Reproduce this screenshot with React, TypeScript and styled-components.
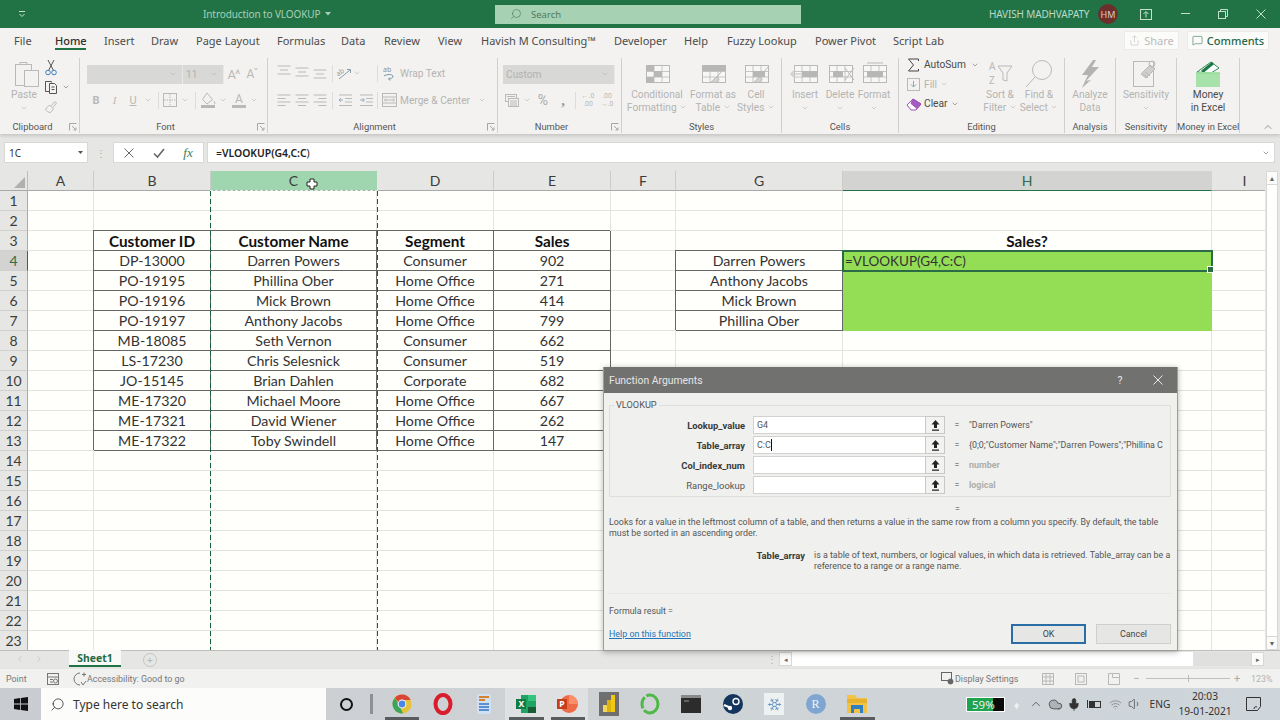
import React from "react";
import styled, { createGlobalStyle } from "styled-components";
import {
  ChevronDown,
  ChevronLeft,
  ChevronRight,
  ChevronUp,
  Cloud,
  MessageSquare,
  Mic,
  Search,
  Share,
  Snowflake,
  Volume1,
  Wifi,
} from "lucide-react";

const UI_FONT = `"Noto Sans", "Open Sans", sans-serif`;
const SMALL_FONT = `Roboto, "Noto Sans", sans-serif`;
const GRID_FONT = `Lato, "Open Sans", sans-serif`;
const GREEN = "#217346";
const GREY = "#b9b9b7";

const GlobalStyle = createGlobalStyle`
  html, body { margin: 0; padding: 0; background: #f3f2f0; }
  * { box-sizing: border-box; }
`;

const Page = styled.div`
  position: relative;
  width: 1280px;
  height: 720px;
  overflow: hidden;
  display: flex;
  flex-direction: column;
  font-family: ${UI_FONT};
  color: #444;
  background: #f3f2f0;
`;

const Slot = styled.span<{ $w: number; $color?: string }>`
  flex: none;
  width: ${(p) => p.$w}px;
  display: flex;
  align-items: center;
  justify-content: center;
  color: ${(p) => p.$color || "inherit"};
`;

/* ---------- title bar ---------- */
const TitleBar = styled.header`
  flex: none;
  height: 28px;
  background: ${GREEN};
  display: flex;
  align-items: center;
  color: #c4e0cd;
  font-size: 10px;
`;
const DocTitle = styled.div`
  width: 292px;
  margin-left: 159px;
  display: flex;
  align-items: center;
  gap: 5px;
  color: #a9cfb6;
  letter-spacing: -0.1px;
`;
const SearchBox = styled.div`
  width: 306px;
  height: 19px;
  background: #a6d2b3;
  display: flex;
  align-items: center;
  gap: 9px;
  padding-left: 15px;
  color: #51795f;
  font-size: 9.5px;
`;
const UserName = styled.div`
  margin-left: 188px;
  width: 100px;
  white-space: nowrap;
  color: #bcd9c6;
  letter-spacing: -0.15px;
`;
const Avatar = styled.div`
  margin-left: 9px;
  width: 20px;
  height: 20px;
  border-radius: 50%;
  background: #6b2f2c;
  color: #ddc9c6;
  font-size: 9px;
  display: flex;
  align-items: center;
  justify-content: center;
`;
const WindowButton = styled(Slot)`
  height: 100%;
`;

/* ---------- tabs ---------- */
const TabRow = styled.nav`
  flex: none;
  height: 27px;
  display: flex;
  align-items: center;
  font-size: 11px;
  color: #4c4c4a;
  padding: 0 0 2px 14px;
`;
const Tab = styled.span<{ $w: number; $active?: boolean }>`
  position: relative;
  flex: none;
  width: ${(p) => p.$w}px;
  white-space: nowrap;
  font-weight: ${(p) => (p.$active ? 500 : 400)};
  color: ${(p) => (p.$active ? "#2f2f2f" : "inherit")};
  &::after {
    content: "";
    display: ${(p) => (p.$active ? "block" : "none")};
    position: absolute;
    left: 0;
    top: 15px;
    width: 31px;
    height: 2px;
    background: ${GREEN};
  }
`;
const PillButton = styled.div<{ $w: number; $muted?: boolean }>`
  flex: none;
  width: ${(p) => p.$w}px;
  height: 19px;
  background: #fbfbf9;
  border: 1px solid #ecebe9;
  display: flex;
  align-items: center;
  justify-content: center;
  gap: 4px;
  font-size: 11px;
  font-weight: ${(p) => (p.$muted ? 400 : 500)};
  color: ${(p) => (p.$muted ? "#bcbcba" : "#27674a")};
`;

/* ---------- ribbon ---------- */
const Ribbon = styled.section`
  flex: none;
  height: 79px;
  display: flex;
  padding-top: 4px;
  padding-bottom: 1px;
  background: #f3f2f0;
  box-shadow: 0 2px 3px rgba(0, 0, 0, 0.14);
  position: relative;
  z-index: 2;
  font-family: ${SMALL_FONT};
`;
const Group = styled.div<{ $w: number }>`
  flex: none;
  width: ${(p) => p.$w}px;
  margin-top: -1px;
  border-right: 1px solid #cfcfcd;
  display: flex;
  flex-direction: column;
  position: relative;
`;
const GroupBody = styled.div<{ $pad?: number; $col?: boolean }>`
  flex: 1;
  display: flex;
  flex-direction: ${(p) => (p.$col ? "column" : "row")};
  padding-left: ${(p) => p.$pad || 0}px;
  padding-top: 1px;
  min-height: 0;
`;
const GroupLabel = styled.div<{ $shift?: number }>`
  flex: none;
  height: 13px;
  line-height: 13px;
  font-size: 9.4px;
  text-align: center;
  color: #555;
  white-space: nowrap;
  padding-right: ${(p) => p.$shift || 0}px;
`;
const Launcher = styled.span`
  position: absolute;
  right: 2px;
  bottom: 2px;
  width: 8px;
  height: 8px;
  display: flex;
  color: #a6a6a4;
`;
const ToolRow = styled.div<{ $top?: number }>`
  height: 20px;
  margin-top: ${(p) => p.$top || 0}px;
  display: flex;
  align-items: center;
  color: ${GREY};
  font-size: 10.2px;
`;
const Combo = styled.div<{ $w: number }>`
  flex: none;
  width: ${(p) => p.$w}px;
  height: 19px;
  background: #d8d8d6;
  border-right: 1px solid #e8e8e6;
  display: flex;
  align-items: center;
  justify-content: space-between;
  padding: 0 5px 0 3px;
  color: #b2b2b0;
  font-size: 10.2px;
`;
const RowSep = styled.span`
  flex: none;
  width: 1px;
  height: 17px;
  background: #dcdcda;
`;
const ToolText = styled.span<{ $w?: number; $on?: boolean }>`
  flex: none;
  white-space: nowrap;
  width: ${(p) => (p.$w ? `${p.$w}px` : "auto")};
  color: ${(p) => (p.$on ? "#4a4a48" : "#b4b4b2")};
`;
const LargeTool = styled.div<{ $w: number; $on?: boolean }>`
  flex: none;
  width: ${(p) => p.$w}px;
  display: flex;
  flex-direction: column;
  align-items: center;
  font-size: 10.2px;
  line-height: 13px;
  white-space: nowrap;
  color: ${(p) => (p.$on ? "#4a4a48" : "#b4b4b2")};
`;
const IconZone = styled.div`
  height: 29px;
  display: flex;
  align-items: center;
  justify-content: center;
  color: ${GREY};
`;
const TinyChev = styled(ChevronDown).attrs({ size: 8, strokeWidth: 1.5 })`
  color: #a9a9a7;
  flex: none;
`;
const MiniCol = styled.div<{ $w: number; $pad?: number; $top?: number }>`
  flex: none;
  width: ${(p) => p.$w}px;
  padding-left: ${(p) => p.$pad || 0}px;
  margin-top: ${(p) => p.$top || 0}px;
  display: flex;
  flex-direction: column;
`;
const EditRow = styled.div`
  height: 19.5px;
  display: flex;
  align-items: center;
  gap: 3px;
  font-size: 10.2px;
  flex: none;
`;
const ClipSlot = styled(Slot)`
  height: 19.5px;
`;

/* ---------- formula bar ---------- */
const FormulaBar = styled.section`
  flex: none;
  height: 37px;
  padding: 8px 5px 8px 4px;
  background: #e6e6e4;
  display: flex;
  align-items: stretch;
`;
const NameBox = styled.div`
  width: 84px;
  background: #fff;
  border: 1px solid #d8d8d6;
  display: flex;
  align-items: center;
  justify-content: space-between;
  padding: 0 4px;
  font-size: 10px;
  color: #333;
`;
const Dots = styled.div`
  width: 25px;
  display: flex;
  align-items: center;
  justify-content: center;
  color: #aaa;
  font-size: 10px;
`;
const FxBox = styled.div`
  width: 91px;
  background: #fff;
  border: 1px solid #d8d8d6;
  display: flex;
  align-items: center;
  margin-right: 3px;
  color: #666;
`;
const FormulaInput = styled.div`
  flex: 1;
  background: #fff;
  border: 1px solid #d8d8d6;
  display: flex;
  align-items: center;
  justify-content: space-between;
  padding: 0 4px 0 8px;
  font-size: 10.4px;
  color: #222;
`;
const Fx = styled.i`
  font-family: "Liberation Serif", serif;
  font-size: 13px;
  color: #3a7d55;
`;

/* ---------- sheet ---------- */
const SheetArea = styled.section`
  flex: none;
  height: 479px;
  display: flex;
  background: #e6e6e4;
`;
const GridWrap = styled.div`
  position: relative;
  width: 1265px;
  overflow: hidden;
  background: #fffffc;
`;
const SheetGrid = styled.div`
  display: grid;
  grid-template-columns: 28px 66px 117px 166px 117px 117px 65px 167px 369px 66px;
  grid-auto-rows: 20px;
  font-family: ${GRID_FONT};
  font-size: 14.2px;
  color: #333;
`;
const Corner = styled.div`
  background: #e6e6e4;
  border-right: 1px solid #bdbdbb;
  border-bottom: 1px solid #a9a9a7;
  display: flex;
  justify-content: flex-end;
  align-items: flex-end;
  padding: 0 2px 2px 0;
`;
const ColHead = styled.div<{ $state?: "copy" | "active" }>`
  background: ${(p) =>
    p.$state === "copy" ? "#9fd6b0" : p.$state === "active" ? "#d3d3d1" : "#e6e6e4"};
  border-right: 1px solid ${(p) => (p.$state ? "transparent" : "#cbcbc9")};
  border-bottom: 1px solid ${(p) => (p.$state === "active" ? GREEN : "#a9a9a7")};
  color: ${(p) => (p.$state === "active" ? "#2f6b4a" : "#3c3c3c")};
  display: flex;
  align-items: center;
  justify-content: center;
  font-size: 14px;
`;
const RowHead = styled.div<{ $active?: boolean }>`
  background: ${(p) => (p.$active ? "#d3d3d1" : "#e6e6e4")};
  border-right: 1px solid ${(p) => (p.$active ? GREEN : "#a9a9a7")};
  border-bottom: 1px solid #d0d0ce;
  color: ${(p) => (p.$active ? "#2f6b4a" : "#3c3c3c")};
  display: flex;
  align-items: center;
  justify-content: center;
  font-size: 14px;
`;
const Cell = styled.div<{
  $bold?: boolean;
  $boxed?: boolean;
  $fill?: boolean;
  $active?: boolean;
  $left?: boolean;
}>`
  position: relative;
  display: flex;
  align-items: center;
  justify-content: ${(p) => (p.$left ? "flex-start" : "center")};
  padding-left: ${(p) => (p.$left ? 2 : 0)}px;
  white-space: nowrap;
  font-weight: ${(p) => (p.$bold ? 700 : 400)};
  font-size: ${(p) => (p.$bold ? 15.3 : p.$active ? 13.5 : 14.2)}px;
  color: ${(p) => (p.$bold ? "#111" : "#333")};
  background: ${(p) => (p.$fill ? "#94de56" : "transparent")};
  border-right: 1px solid
    ${(p) => (p.$boxed ? "#666" : p.$fill ? "transparent" : "#e3e3e1")};
  border-bottom: 1px solid
    ${(p) => (p.$boxed ? "#666" : p.$fill ? "transparent" : "#e3e3e1")};
  ${(p) => (p.$boxed ? "box-shadow: -1px -1px #666;" : "")}
  ${(p) =>
    p.$active
      ? `outline: 2px solid #2b6b45; outline-offset: -1px; z-index: 1;
         &::after { content: ""; position: absolute; right: -3px; bottom: -3px; width: 5px; height: 5px; background: #2b6b45; border: 1px solid #fff; }`
      : ""}
`;
const MarchingAnts = styled.div`
  position: absolute;
  left: 210px;
  top: 19px;
  width: 168px;
  bottom: 0;
  border-top: 1px dashed #d9efe0;
  pointer-events: none;
  &::before,
  &::after {
    content: "";
    position: absolute;
    top: 0;
    bottom: 0;
    width: 1px;
    background: repeating-linear-gradient(to bottom, #14603a 0 5px, transparent 5px 8px);
  }
  &::before {
    left: 0;
  }
  &::after {
    right: 0;
  }
`;
const CellCursor = styled.svg`
  position: absolute;
  left: 306px;
  top: 7px;
`;
const VScroll = styled.div`
  width: 15px;
  display: flex;
  flex-direction: column;
  padding: 0 2px 0 1px;
`;
const VTrack = styled.div`
  flex: 1;
  background: #fff;
  border: 1px solid #d8d8d6;
  border-top: none;
  border-bottom: none;
`;
const ArrowBox = styled.div<{ $w?: number; $h?: number }>`
  flex: none;
  width: ${(p) => (p.$w ? `${p.$w}px` : "100%")};
  height: ${(p) => (p.$h ? `${p.$h}px` : "100%")};
  background: #fbfbf9;
  border: 1px solid #d8d8d6;
  display: flex;
  align-items: center;
  justify-content: center;
  font-size: 7px;
  color: #666;
`;

/* ---------- sheet tabs + status ---------- */
const SheetTabs = styled.section`
  flex: none;
  height: 18px;
  background: #e6e6e4;
  border-top: 1px solid #bdbdbb;
  display: flex;
  align-items: flex-start;
  color: #bbb;
`;
const TabArrows = styled.div`
  width: 69px;
  height: 16px;
  display: flex;
  align-items: center;
  padding-left: 15px;
  gap: 9px;
`;
const SheetTab = styled.div`
  width: 52px;
  height: 17px;
  background: #f9f9f7;
  border-bottom: 2px solid ${GREEN};
  color: #1f6b45;
  font-size: 10.4px;
  font-weight: 700;
  display: flex;
  align-items: center;
  justify-content: center;
  margin-top: -1px;
`;
const AddSheet = styled.span`
  width: 14px;
  height: 14px;
  border-radius: 50%;
  border: 1px solid #c6c6c4;
  color: #b9b9b7;
  font-size: 11px;
  line-height: 11px;
  text-align: center;
  margin: 2px 0 0 22px;
`;
const HScroll = styled.div`
  margin-left: 610px;
  width: 497px;
  height: 16px;
  display: flex;
  align-items: center;
`;
const HTrack = styled.div<{ $w: number; $blank?: boolean }>`
  flex: none;
  width: ${(p) => p.$w}px;
  height: 14px;
  background: ${(p) => (p.$blank ? "#e0e0de" : "#fff")};
`;
const SplitDots = styled.span`
  flex: none;
  width: 12px;
  color: #aaa;
  font-size: 10px;
`;
const StatusBar = styled.footer`
  flex: none;
  height: 20px;
  background: #f1f1ef;
  border-top: 1px solid #e4e4e2;
  display: flex;
  align-items: center;
  font-family: ${SMALL_FONT};
  font-size: 8.9px;
  color: #777;
  white-space: nowrap;
`;
const StatusText = styled.span<{ $w: number; $left?: number }>`
  flex: none;
  width: ${(p) => p.$w}px;
  margin-left: ${(p) => p.$left || 0}px;
`;
const ZoomTrack = styled.span`
  position: relative;
  flex: none;
  width: 84px;
  height: 1px;
  background: #c0c0be;
  &::after {
    content: "";
    position: absolute;
    left: 42px;
    top: -3px;
    width: 1px;
    height: 7px;
    background: #bbb;
  }
`;
const ZoomLevel = styled.span`
  margin-left: 7px;
  color: #b4b4b2;
`;

/* ---------- taskbar ---------- */
const Taskbar = styled.footer`
  flex: none;
  height: 32px;
  background: linear-gradient(to right, #c9ccd0, #cfd3d6 50%, #ced6db);
  display: flex;
  align-items: stretch;
`;
const TaskSearch = styled.div`
  width: 285px;
  background: #fcfcfa;
  display: flex;
  align-items: center;
  gap: 8px;
  padding-left: 9px;
  font-size: 12px;
  color: #333;
`;
const TaskIcon = styled.div<{ $open?: boolean; $active?: boolean }>`
  position: relative;
  flex: none;
  width: 41.4px;
  display: flex;
  align-items: center;
  justify-content: center;
  background: ${(p) => (p.$active ? "#dfe0e1" : "transparent")};
  &::after {
    content: "";
    display: ${(p) => (p.$open ? "block" : "none")};
    position: absolute;
    left: 4px;
    right: 3px;
    bottom: 0;
    height: 3px;
    background: #595c5f;
  }
`;
const Tray = styled.div`
  margin-left: auto;
  width: 314px;
  flex: none;
  display: flex;
  align-items: center;
  color: #333;
`;
const BatteryMeter = styled.div`
  flex: none;
  width: 39px;
  height: 15px;
  display: flex;
  border: 1px solid #fff;
  color: #eee;
  font-size: 11.5px;
  line-height: 13px;
  background: #0b0b0b;
  overflow: hidden;
`;
const BatteryFill = styled.span`
  width: 26px;
  padding-left: 5px;
  background: #1fa34e;
  white-space: nowrap;
`;
const ClockText = styled.div`
  text-align: center;
  font-size: 10.2px;
  line-height: 15px;
  color: #333;
`;
const LangText = styled.span`
  font-size: 10.2px;
`;

/* ---------- dialog ---------- */
const Dialog = styled.div`
  position: absolute;
  left: 603px;
  top: 367px;
  width: 575px;
  height: 284px;
  background: #f0f0ee;
  border: 1px solid #9c9c9a;
  border-top: none;
  box-shadow: 0 1px 6px rgba(0, 0, 0, 0.3);
  z-index: 5;
  display: flex;
  flex-direction: column;
  font-family: ${SMALL_FONT};
  font-size: 8.9px;
  color: #444;
`;
const DialogTitle = styled.div`
  flex: none;
  height: 26px;
  background: #717170;
  color: #e6e6e6;
  font-size: 10.4px;
  display: flex;
  align-items: center;
  padding-left: 5px;
  justify-content: space-between;
`;
const DialogActions = styled.div`
  display: flex;
  align-items: center;
  color: #eaeaea;
`;
const FuncBox = styled.fieldset`
  margin: 6px 6px 0 5px;
  padding: 0;
  height: 98px;
  border: 1px solid #dededc;
  display: flex;
  flex-direction: column;
  min-width: 0;
  legend {
    margin-left: 4px;
    padding: 0 2px;
    font-size: 9.2px;
    line-height: 12px;
    color: #555;
  }
`;
const ArgList = styled.div`
  display: grid;
  grid-template-columns: 143px 192px 24px 1fr;
  grid-auto-rows: 20px;
  margin-top: 4px;
  align-items: center;
`;
const ArgLabel = styled.span<{ $bold?: boolean }>`
  text-align: right;
  padding-right: 8px;
  font-size: 9.4px;
  font-weight: ${(p) => (p.$bold ? 700 : 400)};
  color: ${(p) => (p.$bold ? "#3a3a3a" : "#555")};
`;
const ArgInput = styled.div`
  height: 18px;
  display: flex;
  background: #fff;
  border: 1px solid #d2d2d0;
  padding-left: 3px;
  align-items: center;
  justify-content: space-between;
  color: #555;
`;
const ArgText = styled.span`
  display: flex;
  align-items: center;
`;
const Caret = styled.span`
  width: 1px;
  height: 12px;
  background: #111;
`;
const RefButton = styled.span`
  flex: none;
  width: 20px;
  height: 18px;
  margin-right: -1px;
  background: #f2f2f0;
  border: 1px solid #c8c8c6;
  display: flex;
  align-items: center;
  justify-content: center;
`;
const ArgEq = styled.span`
  text-align: center;
`;
const ArgValue = styled.span<{ $muted?: boolean }>`
  white-space: nowrap;
  font-weight: ${(p) => (p.$muted ? 700 : 400)};
  color: ${(p) => (p.$muted ? "#aeaeac" : "#555")};
`;
const ResultEq = styled.div`
  height: 12px;
  margin-top: 6px;
  padding-left: 351px;
  line-height: 12px;
`;
const DescText = styled.p`
  margin: 2px 6px 0 5px;
  line-height: 11px;
  white-space: nowrap;
  color: #555;
`;
const ArgHelp = styled.div`
  display: grid;
  grid-template-columns: 196px 1fr;
  column-gap: 9px;
  margin: 11px 6px 0 5px;
  line-height: 11px;
  color: #555;
  white-space: nowrap;
  b {
    text-align: right;
    font-size: 9.4px;
    color: #3a3a3a;
  }
`;
const Rule = styled.div`
  height: 1px;
  background: #e6e6e4;
  margin: 21px 6px 0 5px;
`;
const ResultLine = styled.div`
  margin: 11px 6px 0 5px;
  line-height: 12px;
  color: #555;
`;
const DialogFoot = styled.div`
  display: flex;
  align-items: center;
  margin: 7px 6px 0 5px;
  gap: 10px;
`;
const HelpLink = styled.a`
  margin-right: auto;
  color: #1f74b8;
  text-decoration: underline;
`;
const DialogButton = styled.div<{ $primary?: boolean }>`
  width: 75px;
  height: 20px;
  background: #e6e6e4;
  border: ${(p) => (p.$primary ? "2px solid #2a6ea5" : "1px solid #cfcfcd")};
  display: flex;
  align-items: center;
  justify-content: center;
  color: #444;
`;

/* ---------- icons ---------- */
type IcoProps = { w: number; h: number; children: React.ReactNode; color?: string };
const Ico = ({ w, h, children, color }: IcoProps) => (
  <svg
    width={w}
    height={h}
    viewBox={`0 0 ${w} ${h}`}
    fill="none"
    stroke={color || "currentColor"}
    strokeWidth={1}
    overflow="visible"
  >
    {children}
  </svg>
);

const LauncherIcon = () => (
  <Launcher>
    <Ico w={8} h={8}>
      <path d="M0.5 7.5V0.5H7.5M3 3L7 7M7 4.5V7H4.5" />
    </Ico>
  </Launcher>
);

const LinesIcon = ({ align, drop = 0 }: { align: "l" | "c" | "r"; drop?: number }) => {
  const rows = drop === 0 ? [3, 6.5, 10, 13.5] : [2 + drop, 6 + drop, 10 + drop];
  return (
    <Ico w={14} h={16}>
      {rows.map((y, i) => {
        const short = i % 2 === 1;
        const len = short ? 8 : 13;
        const x = align === "l" ? 0.5 : align === "r" ? 13.5 - len : 7 - len / 2;
        return <path key={y} d={`M${x} ${y}h${len}`} />;
      })}
    </Ico>
  );
};

const IndentIcon = ({ flip }: { flip?: boolean }) => (
  <Ico w={15} h={14}>
    <path d="M1 2h13M7 5.5h7M7 9h7M1 12.5h13" />
    <path d={flip ? "M1 7h4M3.5 5l2 2-2 2" : "M5 7H1M3 5L1 7l2 2"} stroke="#9ab" />
  </Ico>
);

const SheetIcon = ({ fills, extra }: { fills: number[][]; extra?: React.ReactNode }) => (
  <Ico w={30} h={24}>
    <rect x={4.5} y={3.5} width={23} height={17} fill="#f7f7f5" />
    {fills.map((f, i) => (
      <rect key={i} x={f[0]} y={f[1]} width={f[2]} height={f[3]} fill="#b7b7b5" stroke="none" />
    ))}
    <path d="M4.5 9.5h23M4.5 15h23M12 3.5v17M20 3.5v17" strokeWidth={0.8} />
    {extra}
  </Ico>
);

const Brush = () => (
  <path d="M27 5L19 15M19 15c-3 0-3 4-6 5 4 1 8 0 8-3z" fill="#d4d4d2" />
);

const PasteIcon = () => (
  <Ico w={26} h={28}>
    <rect x={1.5} y={4.5} width={16} height={21} fill="#f3f2f0" />
    <path d="M6 4.5V2.5h7v2" />
    <rect x={10.5} y={10.5} width={14} height={16} fill="#f3f2f0" />
  </Ico>
);
const CutIcon = () => (
  <Ico w={12} h={17}>
    <path d="M3 1l5.5 10.5M9 1L3.5 11.5" stroke="#555" />
    <circle cx={3} cy={13.5} r={2.3} stroke="#3c7fc4" />
    <circle cx={9} cy={13.5} r={2.3} stroke="#3c7fc4" />
  </Ico>
);
const CopyIcon = () => (
  <Ico w={14} h={15} color="#555">
    <path d="M5 11.5H1.5V1.5h6v1" />
    <path d="M5.5 3.5h5l2 2v8h-7zM7.5 7h3M7.5 9.5h3" fill="#f3f2f0" />
  </Ico>
);
const PainterIcon = () => (
  <Ico w={14} h={14}>
    <path d="M1.5 9l4-4 4 4-3 3.5c-2 0-4-1-5-3.5zM7 6l4-4.5 1.5 1.5L9 7.5" />
  </Ico>
);
const FillIcon = () => (
  <Ico w={16} h={17}>
    <path d="M7 1l5.5 6.5L7 12 2.5 7.5z" />
    <path d="M14 9c1 2 1 3 0 3.5" />
    <rect x={1} y={13} width={14} height={3} fill="#b7b7b5" stroke="none" />
  </Ico>
);
const BorderIcon = () => (
  <Ico w={14} h={14}>
    <rect x={0.5} y={0.5} width={13} height={13} />
    <path d="M7 1v12M1 7h12" strokeDasharray="1.5 1" />
  </Ico>
);
const WrapIcon = () => (
  <Ico w={13} h={15}>
    <text x={0} y={6} fontSize={7} fill="#8e8e8c" stroke="none" fontFamily={UI_FONT}>
      ab
    </text>
    <path d="M1 10c3-2 8-2 9 0 0 2-2 3-4 3M7 11.5L5.5 13 7 14.5" stroke="#6f93a8" />
  </Ico>
);
const MergeIcon = () => (
  <Ico w={15} h={14}>
    <rect x={0.5} y={0.5} width={14} height={13} />
    <path d="M1 4h13M1 10h13M2.5 7h10M4 5.5L2.5 7 4 8.5M11 5.5L12.5 7 11 8.5" />
  </Ico>
);
const OrientIcon = () => (
  <Ico w={16} h={15}>
    <text x={1} y={9} fontSize={7} fill="#9a9a98" stroke="none" fontFamily={UI_FONT} transform="rotate(-35 4 8)">
      ab
    </text>
    <path d="M3 13L14 4M11 3.5L14.5 3.5 14.5 7" stroke="#8b9da8" />
  </Ico>
);
const AccountIcon = () => (
  <Ico w={16} h={15}>
    <rect x={0.5} y={1.5} width={11} height={7} />
    <rect x={3.5} y={5.5} width={10} height={8} fill="#f3f2f0" />
    <path d="M5 8h7M5 10h7M5 12h7M2 3.5h8" />
  </Ico>
);
const SigmaIcon = () => (
  <Ico w={13} h={14} color="#444">
    <path d="M11.5 3V1H1.5l5 6-5 6h10v-2" />
  </Ico>
);
const DownBox = () => (
  <Ico w={13} h={13}>
    <rect x={0.5} y={0.5} width={12} height={12} />
    <path d="M6.5 3v6M4 6.5l2.5 2.5L9 6.5" stroke="#8aa" />
  </Ico>
);
const EraserIcon = () => (
  <Ico w={16} h={14}>
    <path d="M1 8l6-6 8 5-5 6H5z" fill="#fff" stroke="#9c4fb8" />
    <path d="M7 2l8 5-4 4.5-6-5z" fill="#a55cc0" stroke="#9c4fb8" />
  </Ico>
);
const SortIcon = () => (
  <Ico w={26} h={30}>
    <text x={2} y={11} fontSize={10} fill={GREY} stroke="none" fontFamily={UI_FONT}>
      A
    </text>
    <text x={2} y={25} fontSize={10} fill={GREY} stroke="none" fontFamily={UI_FONT}>
      Z
    </text>
    <path d="M11 7h14l-5 7v8l-4-1v-7z" />
  </Ico>
);
const FindIcon = () => (
  <Ico w={30} h={30}>
    <circle cx={18} cy={11} r={9.5} />
    <path d="M11 18L2 28" />
  </Ico>
);
const AnalyzeIcon = () => (
  <Ico w={24} h={30}>
    <path d="M15 1L4 16h6l-3 6 1 0 13-14h-7l4-7zM7 22l-3 7 9-8" fill="#b3b3b1" stroke="none" />
  </Ico>
);
const SensitivityIcon = () => (
  <Ico w={28} h={30}>
    <rect x={1.5} y={2.5} width={20} height={25} />
    <path d="M9 15l9-9 5 4-9 9z" fill="#cfcfcd" />
    <circle cx={20} cy={5} r={3} />
    <path d="M11 15l5 4M13 13l5 4" />
  </Ico>
);
const MoneyIcon = () => (
  <svg width={30} height={28} viewBox="0 0 30 28">
    <path d="M4 12l14-10 8 6-8 5z" fill="#fff" stroke="#2e8b57" />
    <path d="M9 12L20 3" stroke="#1f7a46" strokeWidth={3} />
    <rect x={3} y={12} width={24} height={15} fill="#a6e2a9" />
    <path d="M3 12h13l3 1h8v1H3z" fill="#9adb9e" />
  </svg>
);
const InsertSheet = () => (
  <SheetIcon
    fills={[[12, 9, 16, 6]]}
    extra={<path d="M1 12h10M5 8l-4 4 4 4" stroke="#cfcfcd" strokeWidth={1.5} />}
  />
);
const DeleteSheet = () => (
  <SheetIcon fills={[[8, 9, 10, 6]]} extra={<path d="M20 6l9 12M29 6l-9 12" />} />
);
const FormatSheet = () => (
  <SheetIcon fills={[[8, 9, 16, 6]]} extra={<path d="M8 1h16" />} />
);

const WindowsLogo = () => (
  <svg width={14} height={14} viewBox="0 0 14 14" fill="#111">
    <path d="M0 2l6-1v5.6H0zM6.8 0.9L14 0v6.6H6.8zM0 7.4h6V13l-6-1zM6.8 7.4H14V14l-7.2-1z" />
  </svg>
);
const ChromeLogo = () => (
  <svg width={20} height={20} viewBox="0 0 20 20">
    <circle cx={10} cy={10} r={9.5} fill="#e2c33b" />
    <path d="M10 .5A9.5 9.5 0 0 1 18.6 6H10a4 4 0 0 0-3.6 2.3L2.9 3.7A9.5 9.5 0 0 1 10 .5z" fill="#db4437" />
    <path d="M2.9 3.7l4.3 7.5L11 19.4A9.5 9.5 0 0 1 2.9 3.7z" fill="#3ba55d" />
    <circle cx={10} cy={10} r={4.4} fill="#fff" />
    <circle cx={10} cy={10} r={3.4} fill="#4a86e8" />
  </svg>
);
const OperaLogo = () => (
  <svg width={20} height={22} viewBox="0 0 20 22">
    <ellipse cx={10} cy={11} rx={7.5} ry={9} fill="none" stroke="#d81e2c" strokeWidth={4} />
  </svg>
);
const NotesLogo = () => (
  <svg width={14} height={20} viewBox="0 0 14 20">
    <rect width={14} height={20} fill="#cfe0f2" />
    <path d="M2 3h10M2 6h6" stroke="#d9822b" strokeWidth={2} />
    <path d="M2 10h10M2 13h10M2 16h10" stroke="#5b8fd0" strokeWidth={2} />
  </svg>
);
const ExcelLogo = () => (
  <svg width={20} height={20} viewBox="0 0 20 20">
    <rect x={5} y={1} width={15} height={18} fill="#21a366" />
    <rect x={12} y={1} width={8} height={6} fill="#33c481" />
    <rect x={12} y={13} width={8} height={6} fill="#185c37" />
    <rect y={5} width={10} height={10} fill="#107c41" />
    <text x={2.4} y={13} fontSize={8.5} fontWeight={700} fill="#fff" fontFamily={UI_FONT}>
      X
    </text>
  </svg>
);
const PptLogo = () => (
  <svg width={21} height={20} viewBox="0 0 21 20">
    <circle cx={12} cy={10} r={9} fill="#ed6c47" />
    <path d="M12 1a9 9 0 0 1 9 9h-9z" fill="#ff8f6b" />
    <rect y={5} width={10} height={10} fill="#c43e1c" />
    <text x={2.3} y={13} fontSize={8.5} fontWeight={700} fill="#fff" fontFamily={UI_FONT}>
      P
    </text>
  </svg>
);
const PowerBiLogo = () => (
  <svg width={20} height={24} viewBox="0 0 20 24">
    <rect width={20} height={24} fill="#6f6f6f" />
    <rect x={12} y={3} width={4} height={17} fill="#f2c811" />
    <rect x={8} y={8} width={4} height={12} fill="#ddb40f" />
    <rect x={4} y={13} width={4} height={7} fill="#f5d65b" />
  </svg>
);
const RingLogo = () => (
  <svg width={20} height={22} viewBox="0 0 20 22">
    <ellipse cx={10} cy={11} rx={8} ry={9} fill="none" stroke="#4fb848" strokeWidth={3} strokeDasharray="20 2 12 2" />
  </svg>
);
const TerminalLogo = () => (
  <svg width={20} height={18} viewBox="0 0 20 18">
    <rect width={20} height={18} fill="#2c2c2c" />
    <rect width={20} height={3} fill="#8a8a8a" />
    <path d="M3 6h5" stroke="#999" />
  </svg>
);
const SteamLogo = () => (
  <svg width={20} height={20} viewBox="0 0 20 20">
    <circle cx={10} cy={10} r={10} fill="#14365c" />
    <circle cx={13} cy={7.5} r={3} fill="none" stroke="#fff" strokeWidth={1.4} />
    <path d="M1 11l7 3" stroke="#fff" strokeWidth={2.2} />
    <circle cx={7} cy={14} r={2.2} fill="#fff" />
  </svg>
);
const SnowTile = styled.span`
  width: 20px;
  height: 22px;
  background: #eef1f2;
  display: flex;
  align-items: center;
  justify-content: center;
  color: #4c84b8;
`;
const RBadge = styled.span`
  width: 20px;
  height: 20px;
  border-radius: 50%;
  background: #7ea6d1;
  color: #f4f4f4;
  font-family: "Liberation Serif", serif;
  font-size: 12px;
  display: flex;
  align-items: center;
  justify-content: center;
`;
const FolderLogo = () => (
  <svg width={20} height={20} viewBox="0 0 20 20">
    <path d="M0 1h8l2 3h10v15H0z" fill="#f1c244" />
    <rect y={5} width={20} height={4} fill="#e7b32e" />
    <path d="M4 19v-8h12v8h-3v-4H7v4z" fill="#2f7fc1" />
  </svg>
);
const CortanaRing = styled.span`
  width: 13px;
  height: 13px;
  border-radius: 50%;
  border: 2px solid #111;
`;
const TaskSep = styled.span`
  width: 3px;
  height: 20px;
  background: #8d9094;
`;
const ArrowUpRef = () => (
  <svg width={9} height={11} viewBox="0 0 9 11">
    <path d="M4.5 0L8.5 4.5H6V8H3V4.5H.5zM1 9.5h7v1.2H1z" fill="#222" />
  </svg>
);
const MirroredSearch = styled(Search)`
  transform: scaleX(-1);
  flex: none;
`;

/* ---------- data ---------- */
const TABS: [string, number][] = [
  ["File", 41],
  ["Home", 49],
  ["Insert", 47],
  ["Draw", 45],
  ["Page Layout", 81],
  ["Formulas", 64],
  ["Data", 43],
  ["Review", 54],
  ["View", 43],
  ["Havish M Consulting™", 133],
  ["Developer", 70],
  ["Help", 43],
  ["Fuzzy Lookup", 88],
  ["Power Pivot", 78],
  ["Script Lab", 231],
];

const COLUMNS = ["A", "B", "C", "D", "E", "F", "G", "H", "I"];

const CUSTOMERS = [
  ["DP-13000", "Darren Powers", "Consumer", "902"],
  ["PO-19195", "Phillina Ober", "Home Office", "271"],
  ["PO-19196", "Mick Brown", "Home Office", "414"],
  ["PO-19197", "Anthony Jacobs", "Home Office", "799"],
  ["MB-18085", "Seth Vernon", "Consumer", "662"],
  ["LS-17230", "Chris Selesnick", "Consumer", "519"],
  ["JO-15145", "Brian Dahlen", "Corporate", "682"],
  ["ME-17320", "Michael Moore", "Home Office", "667"],
  ["ME-17321", "David Wiener", "Home Office", "262"],
  ["ME-17322", "Toby Swindell", "Home Office", "147"],
];

const LOOKUPS = ["Darren Powers", "Anthony Jacobs", "Mick Brown", "Phillina Ober"];

const ARGS = [
  { label: "Lookup_value", bold: true, input: "G4", value: '"Darren Powers"' },
  {
    label: "Table_array",
    bold: true,
    input: "C:C",
    caret: true,
    value: '{0;0;"Customer Name";"Darren Powers";"Phillina C',
  },
  { label: "Col_index_num", bold: true, input: "", value: "number", muted: true },
  { label: "Range_lookup", bold: false, input: "", value: "logical", muted: true },
];

const sheetCell = (row: number, col: number) => {
  const tableCol = col >= 1 && col <= 4;
  const key = `${row}-${col}`;
  if (tableCol && row === 3) {
    const heads = ["Customer ID", "Customer Name", "Segment", "Sales"];
    return (
      <Cell key={key} $bold $boxed>
        {heads[col - 1]}
      </Cell>
    );
  }
  if (tableCol && row >= 4 && row <= 13) {
    return (
      <Cell key={key} $boxed>
        {CUSTOMERS[row - 4][col - 1]}
      </Cell>
    );
  }
  if (col === 6 && row >= 4 && row <= 7) {
    return (
      <Cell key={key} $boxed>
        {LOOKUPS[row - 4]}
      </Cell>
    );
  }
  if (col === 7 && row === 3) {
    return (
      <Cell key={key} $bold>
        Sales?
      </Cell>
    );
  }
  if (col === 7 && row === 4) {
    return (
      <Cell key={key} $fill $active $left>
        =VLOOKUP(G4,C:C)
      </Cell>
    );
  }
  if (col === 7 && row >= 5 && row <= 7) return <Cell key={key} $fill />;
  return <Cell key={key} />;
};

const App = () => (
  <Page>
    <GlobalStyle />
    <TitleBar>
      <Slot $w={44}>
        <Ico w={8} h={8}>
          <path d="M1 1.5h6M1.5 4l2.5 2.5L6.5 4" />
        </Ico>
      </Slot>
      <DocTitle>
        Introduction to VLOOKUP
        <svg width={6} height={4} viewBox="0 0 6 4" fill="currentColor">
          <path d="M0 0h6L3 3.5z" />
        </svg>
      </DocTitle>
      <SearchBox>
        <MirroredSearch size={12} strokeWidth={1.3} />
        Search
      </SearchBox>
      <UserName>HAVISH MADHVAPATY</UserName>
      <Avatar>HM</Avatar>
      <Slot $w={5} />
      <WindowButton $w={46}>
        <Ico w={12} h={11}>
          <rect x={0.5} y={0.5} width={11} height={10} />
          <path d="M6 8.5V3M3.5 5L6 2.5 8.5 5" />
        </Ico>
      </WindowButton>
      <WindowButton $w={32}>
        <Ico w={9} h={2}>
          <path d="M0 .5h9" />
        </Ico>
      </WindowButton>
      <WindowButton $w={44}>
        <Ico w={10} h={10}>
          <rect x={0.5} y={2.5} width={7} height={7} />
          <path d="M2.5 2.5v-2h7v7h-2" />
        </Ico>
      </WindowButton>
      <WindowButton $w={32}>
        <Ico w={10} h={10}>
          <path d="M.5.5l9 9M9.5.5l-9 9" />
        </Ico>
      </WindowButton>
    </TitleBar>

    <TabRow>
      {TABS.map(([t, w]) => (
        <Tab key={t} $w={w} $active={t === "Home"}>
          {t}
        </Tab>
      ))}
      <PillButton $w={55} $muted>
        <Share size={11} strokeWidth={1.2} />
        Share
      </PillButton>
      <Slot $w={8} />
      <PillButton $w={82}>
        <MessageSquare size={11} strokeWidth={1.2} />
        Comments
      </PillButton>
    </TabRow>

    <Ribbon>
      <Group $w={80}>
        <GroupBody>
          <MiniCol $w={42} $pad={12}>
            <IconZone>
              <PasteIcon />
            </IconZone>
            <LargeTool $w={24}>
              Paste
              <TinyChev style={{ marginTop: 3 }} />
            </LargeTool>
          </MiniCol>
          <MiniCol $w={34} $top={-1}>
            <ClipSlot $w={17}>
              <CutIcon />
            </ClipSlot>
            <EditRow>
              <Slot $w={17}>
                <CopyIcon />
              </Slot>
              <TinyChev style={{ color: "#555" }} />
            </EditRow>
            <ClipSlot $w={17} $color={GREY}>
              <PainterIcon />
            </ClipSlot>
          </MiniCol>
        </GroupBody>
        <GroupLabel $shift={14}>Clipboard</GroupLabel>
        <LauncherIcon />
      </Group>

      <Group $w={188}>
        <GroupBody $pad={7} $col>
          <ToolRow $top={5}>
            <Combo $w={96}>
              <span />
              <TinyChev />
            </Combo>
            <Combo $w={41}>
              11
              <TinyChev />
            </Combo>
            <Slot $w={19} style={{ fontSize: 13, letterSpacing: -1 }}>
              A^
            </Slot>
            <Slot $w={18} style={{ fontSize: 12, letterSpacing: -1 }}>
              Aˇ
            </Slot>
          </ToolRow>
          <ToolRow $top={6} style={{ fontSize: 11 }}>
            <Slot $w={18} style={{ fontWeight: 700 }}>B</Slot>
            <Slot $w={19} style={{ fontStyle: "italic", fontFamily: "Liberation Serif" }}>I</Slot>
            <Slot $w={18} style={{ textDecoration: "underline" }}>U</Slot>
            <Slot $w={12}><TinyChev /></Slot>
            <Slot $w={8}><RowSep /></Slot>
            <Slot $w={16}><BorderIcon /></Slot>
            <Slot $w={14}><TinyChev /></Slot>
            <Slot $w={6}><RowSep /></Slot>
            <Slot $w={20}><FillIcon /></Slot>
            <Slot $w={10}><TinyChev /></Slot>
            <Slot $w={14} style={{ fontSize: 12, borderBottom: `3px solid ${GREY}`, height: 15, margin: "0 4px" }}>A</Slot>
            <Slot $w={8}><TinyChev /></Slot>
          </ToolRow>
        </GroupBody>
        <GroupLabel $shift={16}>Font</GroupLabel>
        <LauncherIcon />
      </Group>

      <Group $w={230}>
        <GroupBody $pad={7} $col>
          <ToolRow $top={4}>
            <Slot $w={18}><LinesIcon align="c" drop={-1} /></Slot>
            <Slot $w={18}><LinesIcon align="c" drop={1} /></Slot>
            <Slot $w={18}><LinesIcon align="c" drop={3} /></Slot>
            <Slot $w={6}><RowSep /></Slot>
            <Slot $w={18}><OrientIcon /></Slot>
            <Slot $w={8}><TinyChev /></Slot>
            <Slot $w={16} />
            <RowSep />
            <Slot $w={22}><WrapIcon /></Slot>
            <ToolText>Wrap Text</ToolText>
          </ToolRow>
          <ToolRow $top={7}>
            <Slot $w={18}><LinesIcon align="l" /></Slot>
            <Slot $w={18}><LinesIcon align="c" /></Slot>
            <Slot $w={18}><LinesIcon align="r" /></Slot>
            <Slot $w={6}><RowSep /></Slot>
            <Slot $w={21}><IndentIcon /></Slot>
            <Slot $w={21}><IndentIcon flip /></Slot>
            <RowSep />
            <Slot $w={22}><MergeIcon /></Slot>
            <ToolText $w={78}>Merge &amp; Center</ToolText>
            <TinyChev />
          </ToolRow>
        </GroupBody>
        <GroupLabel $shift={16}>Alignment</GroupLabel>
        <LauncherIcon />
      </Group>

      <Group $w={124}>
        <GroupBody $pad={5} $col>
          <ToolRow $top={5}>
            <Combo $w={112}>
              Custom
              <TinyChev />
            </Combo>
          </ToolRow>
          <ToolRow $top={6}>
            <Slot $w={20}><AccountIcon /></Slot>
            <Slot $w={8}><TinyChev /></Slot>
            <Slot $w={24} style={{ fontSize: 14, color: "#aaa" }}>%</Slot>
            <Slot $w={16} style={{ fontSize: 15, fontWeight: 700, color: "#999", fontFamily: "Liberation Serif" }}>,</Slot>
            <Slot $w={8}><RowSep /></Slot>
            <Slot $w={18} style={{ fontSize: 7, lineHeight: "8px", textAlign: "center" }}>
              ←.0
              <br />
              .00
            </Slot>
            <Slot $w={20} style={{ fontSize: 7, lineHeight: "8px", textAlign: "center" }}>
              .00
              <br />
              →.0
            </Slot>
          </ToolRow>
        </GroupBody>
        <GroupLabel $shift={16}>Number</GroupLabel>
        <LauncherIcon />
      </Group>

      <Group $w={160}>
        <GroupBody $pad={2}>
          <LargeTool $w={66}>
            <IconZone>
              <SheetIcon fills={[[4, 3, 8, 6], [12, 9, 8, 6], [4, 15, 8, 6]]} />
            </IconZone>
            Conditional
            <span>Formatting <TinyChev /></span>
          </LargeTool>
          <LargeTool $w={46}>
            <IconZone>
              <SheetIcon fills={[[4, 3, 24, 6]]} extra={<Brush />} />
            </IconZone>
            Format as
            <span>Table <TinyChev /></span>
          </LargeTool>
          <LargeTool $w={40}>
            <IconZone>
              <SheetIcon fills={[[12, 9, 12, 6]]} extra={<Brush />} />
            </IconZone>
            Cell
            <span>Styles <TinyChev /></span>
          </LargeTool>
        </GroupBody>
        <GroupLabel>Styles</GroupLabel>
      </Group>

      <Group $w={117}>
        <GroupBody $pad={3}>
          <LargeTool $w={40}>
            <IconZone><InsertSheet /></IconZone>
            Insert
            <TinyChev style={{ marginTop: 3 }} />
          </LargeTool>
          <LargeTool $w={30}>
            <IconZone><DeleteSheet /></IconZone>
            Delete
            <TinyChev style={{ marginTop: 3 }} />
          </LargeTool>
          <LargeTool $w={38}>
            <IconZone><FormatSheet /></IconZone>
            Format
            <TinyChev style={{ marginTop: 3 }} />
          </LargeTool>
        </GroupBody>
        <GroupLabel>Cells</GroupLabel>
      </Group>

      <Group $w={166}>
        <GroupBody $pad={7}>
          <MiniCol $w={75} $top={-4}>
            <EditRow>
              <Slot $w={15}><SigmaIcon /></Slot>
              <ToolText $w={43} $on>AutoSum</ToolText>
              <Slot $w={10}><TinyChev style={{ color: "#555" }} /></Slot>
            </EditRow>
            <EditRow>
              <Slot $w={15} $color={GREY}><DownBox /></Slot>
              <ToolText>Fill</ToolText>
              <TinyChev />
            </EditRow>
            <EditRow>
              <Slot $w={15}><EraserIcon /></Slot>
              <ToolText $on>Clear</ToolText>
              <TinyChev style={{ color: "#555" }} />
            </EditRow>
          </MiniCol>
          <LargeTool $w={38}>
            <IconZone><SortIcon /></IconZone>
            Sort &amp;
            <span>Filter <TinyChev /></span>
          </LargeTool>
          <LargeTool $w={40}>
            <IconZone><FindIcon /></IconZone>
            Find &amp;
            <span>Select <TinyChev /></span>
          </LargeTool>
        </GroupBody>
        <GroupLabel>Editing</GroupLabel>
      </Group>

      <Group $w={51}>
        <GroupBody>
          <LargeTool $w={50}>
            <IconZone><AnalyzeIcon /></IconZone>
            Analyze
            <span>Data</span>
          </LargeTool>
        </GroupBody>
        <GroupLabel>Analysis</GroupLabel>
      </Group>

      <Group $w={61}>
        <GroupBody>
          <LargeTool $w={60}>
            <IconZone><SensitivityIcon /></IconZone>
            Sensitivity
            <TinyChev style={{ marginTop: 3 }} />
          </LargeTool>
        </GroupBody>
        <GroupLabel>Sensitivity</GroupLabel>
      </Group>

      <Group $w={63}>
        <GroupBody>
          <LargeTool $w={62} $on>
            <IconZone><MoneyIcon /></IconZone>
            Money
            <span>in Excel</span>
          </LargeTool>
        </GroupBody>
        <GroupLabel>Money in Excel</GroupLabel>
      </Group>

      <Slot $w={40} style={{ alignItems: "flex-end", justifyContent: "flex-end", paddingRight: 6, color: "#555" }}>
        <ChevronUp size={12} strokeWidth={1.2} />
      </Slot>
    </Ribbon>

    <FormulaBar>
      <NameBox>
        1C
        <svg width={5} height={3} viewBox="0 0 5 3" fill="#555">
          <path d="M0 0h5L2.5 3z" />
        </svg>
      </NameBox>
      <Dots>⋮</Dots>
      <FxBox>
        <Slot $w={30}>
          <Ico w={10} h={10}>
            <path d="M.5.5l9 9M9.5.5l-9 9" />
          </Ico>
        </Slot>
        <Slot $w={30}>
          <Ico w={12} h={10}>
            <path d="M1 5.5L4.5 9 11 1" strokeWidth={1.6} />
          </Ico>
        </Slot>
        <Slot $w={28}><Fx>fx</Fx></Slot>
      </FxBox>
      <FormulaInput>
        <span>
          =<b style={{ fontWeight: 600 }}>VLOOKUP(G4,C:C</b>)
        </span>
        <TinyChev style={{ color: "#444" }} />
      </FormulaInput>
    </FormulaBar>

    <SheetArea>
      <GridWrap>
        <SheetGrid>
          <Corner>
            <svg width={11} height={11} viewBox="0 0 11 11" fill="#b0b0ae">
              <path d="M11 0v11H0z" />
            </svg>
          </Corner>
          {COLUMNS.map((c, i) => (
            <ColHead key={c} $state={i === 2 ? "copy" : i === 7 ? "active" : undefined}>
              {c}
            </ColHead>
          ))}
          {Array.from({ length: 23 }, (_, r) => r + 1).map((row) => (
            <React.Fragment key={row}>
              <RowHead $active={row === 4}>{row}</RowHead>
              {COLUMNS.map((_, i) => sheetCell(row, i))}
            </React.Fragment>
          ))}
        </SheetGrid>
        <MarchingAnts />
        <CellCursor width={12} height={12} viewBox="0 0 12 12">
          <path d="M4 1h4v3h3v4H8v3H4V8H1V4h3z" fill="#fff" stroke="#222" />
        </CellCursor>
      </GridWrap>
      <VScroll>
        <ArrowBox $h={14}>▲</ArrowBox>
        <VTrack />
        <ArrowBox $h={14}>▼</ArrowBox>
      </VScroll>
    </SheetArea>

    <SheetTabs>
      <TabArrows>
        <ChevronLeft size={10} strokeWidth={1.5} />
        <ChevronRight size={10} strokeWidth={1.5} />
      </TabArrows>
      <SheetTab>Sheet1</SheetTab>
      <AddSheet>+</AddSheet>
      <HScroll>
        <SplitDots>⋮</SplitDots>
        <ArrowBox $w={13} $h={14}>◂</ArrowBox>
        <HTrack $w={401} />
        <HTrack $w={58} $blank />
        <ArrowBox $w={13} $h={14}>▸</ArrowBox>
      </HScroll>
    </SheetTabs>

    <StatusBar>
      <StatusText $w={28} $left={6}>Point</StatusText>
      <Slot $w={38} $color="#777">
        <Ico w={12} h={12}>
          <rect x={0.5} y={0.5} width={11} height={11} />
          <path d="M1 4h10M3 6.5h3M3 9h3" />
          <circle cx={8.5} cy={8} r={2} />
        </Ico>
      </Slot>
      <Slot $w={15}>
        <Ico w={14} h={14} color="#777">
          <path d="M7 1a6 6 0 1 0 0 12M9 2.5h4M11 .5v4M8 10l2 3 3-4" />
        </Ico>
      </Slot>
      <StatusText $w={97}>Accessibility: Good to go</StatusText>
      <Slot $w={757} />
      <Ico w={13} h={13} color="#666">
        <rect x={0.5} y={0.5} width={10} height={8} />
        <circle cx={9.5} cy={9.5} r={2.5} fill="#666" />
      </Ico>
      <StatusText $w={62} $left={1}>Display Settings</StatusText>
      <Slot $w={26} $color="#b8b8b6" style={{ marginLeft: 18 }}>
        <Ico w={12} h={12}>
          <rect x={0.5} y={0.5} width={11} height={11} />
          <path d="M4 1v10M8 1v10M1 4h10M1 8h10" />
        </Ico>
      </Slot>
      <Slot $w={40} $color="#b8b8b6">
        <Ico w={12} h={12}>
          <rect x={0.5} y={0.5} width={11} height={11} />
          <rect x={3} y={3} width={6} height={6} />
        </Ico>
      </Slot>
      <Slot $w={26} $color="#b8b8b6">
        <Ico w={12} h={12}>
          <path d="M.5.5h4v4h7v7h-11zM4.5.5h7v4" />
        </Ico>
      </Slot>
      <Slot $w={19} $color="#aaa" style={{ fontSize: 11 }}>−</Slot>
      <ZoomTrack />
      <Slot $w={14} $color="#aaa" style={{ fontSize: 11 }}>+</Slot>
      <ZoomLevel>123%</ZoomLevel>
    </StatusBar>

    <Taskbar>
      <Slot $w={41}><WindowsLogo /></Slot>
      <TaskSearch>
        <MirroredSearch size={15} strokeWidth={1.3} />
        Type here to search
      </TaskSearch>
      <Slot $w={40}><CortanaRing /></Slot>
      <Slot $w={10}><TaskSep /></Slot>
      <Slot $w={5} />
      <TaskIcon $open><ChromeLogo /></TaskIcon>
      <TaskIcon><OperaLogo /></TaskIcon>
      <TaskIcon><NotesLogo /></TaskIcon>
      <TaskIcon $open $active><ExcelLogo /></TaskIcon>
      <TaskIcon $open $active><PptLogo /></TaskIcon>
      <TaskIcon><PowerBiLogo /></TaskIcon>
      <TaskIcon><RingLogo /></TaskIcon>
      <TaskIcon><TerminalLogo /></TaskIcon>
      <TaskIcon><SteamLogo /></TaskIcon>
      <TaskIcon>
        <SnowTile><Snowflake size={15} strokeWidth={1.2} /></SnowTile>
      </TaskIcon>
      <TaskIcon><RBadge>R</RBadge></TaskIcon>
      <TaskIcon $open><FolderLogo /></TaskIcon>
      <Tray>
        <BatteryMeter>
          <BatteryFill>59%</BatteryFill>
        </BatteryMeter>
        <Slot $w={23} $color="#f0f0f0" style={{ fontSize: 11 }}>♦</Slot>
        <Slot $w={15}><ChevronUp size={14} strokeWidth={1.2} /></Slot>
        <Slot $w={24} $color="#444"><Cloud size={15} strokeWidth={1.3} fill="#aeb2b6" /></Slot>
        <Slot $w={14}><Mic size={15} strokeWidth={1.5} fill="#333" /></Slot>
        <Slot $w={27}>
          <Ico w={15} h={10} color="#333">
            <path d="M.5 1v8" />
            <rect x={2.5} y={2.5} width={11} height={6} />
            <rect x={3} y={3} width={5} height={5} fill="#333" stroke="none" />
          </Ico>
        </Slot>
        <Slot $w={14} $color="#666"><Wifi size={13} strokeWidth={1.1} /></Slot>
        <Slot $w={26}><Volume1 size={14} strokeWidth={1.1} /></Slot>
        <Slot $w={24}><LangText>ENG</LangText></Slot>
        <Slot $w={66}>
          <ClockText>
            20:03
            <br />
            19-01-2021
          </ClockText>
        </Slot>
        <Slot $w={30}>
          <Ico w={15} h={14} color="#333">
            <path d="M.5.5h14v9l-3 4h-11z" />
            <path d="M8 12a2 2 0 0 1 3-2" />
          </Ico>
        </Slot>
      </Tray>
    </Taskbar>

    <Dialog>
      <DialogTitle>
        Function Arguments
        <DialogActions>
          <Slot $w={38}>?</Slot>
          <Slot $w={38}>
            <Ico w={10} h={10}>
              <path d="M.5.5l9 9M9.5.5l-9 9" />
            </Ico>
          </Slot>
        </DialogActions>
      </DialogTitle>
      <FuncBox>
        <legend>VLOOKUP</legend>
        <ArgList>
          {ARGS.map((a) => (
            <React.Fragment key={a.label}>
              <ArgLabel $bold={a.bold}>{a.label}</ArgLabel>
              <ArgInput>
                <ArgText>
                  {a.input}
                  {a.caret && <Caret />}
                </ArgText>
                <RefButton>
                  <ArrowUpRef />
                </RefButton>
              </ArgInput>
              <ArgEq>=</ArgEq>
              <ArgValue $muted={a.muted}>{a.value}</ArgValue>
            </React.Fragment>
          ))}
        </ArgList>
      </FuncBox>
      <ResultEq>=</ResultEq>
      <DescText>
        Looks for a value in the leftmost column of a table, and then returns a value in the same row from a column you specify. By default, the table
        <br />
        must be sorted in an ascending order.
      </DescText>
      <ArgHelp>
        <b>Table_array</b>
        <span>
          is a table of text, numbers, or logical values, in which data is retrieved. Table_array can be a
          <br />
          reference to a range or a range name.
        </span>
      </ArgHelp>
      <Rule />
      <ResultLine>Formula result =</ResultLine>
      <DialogFoot>
        <HelpLink>Help on this function</HelpLink>
        <DialogButton $primary>OK</DialogButton>
        <DialogButton>Cancel</DialogButton>
      </DialogFoot>
    </Dialog>
  </Page>
);

export default App;
